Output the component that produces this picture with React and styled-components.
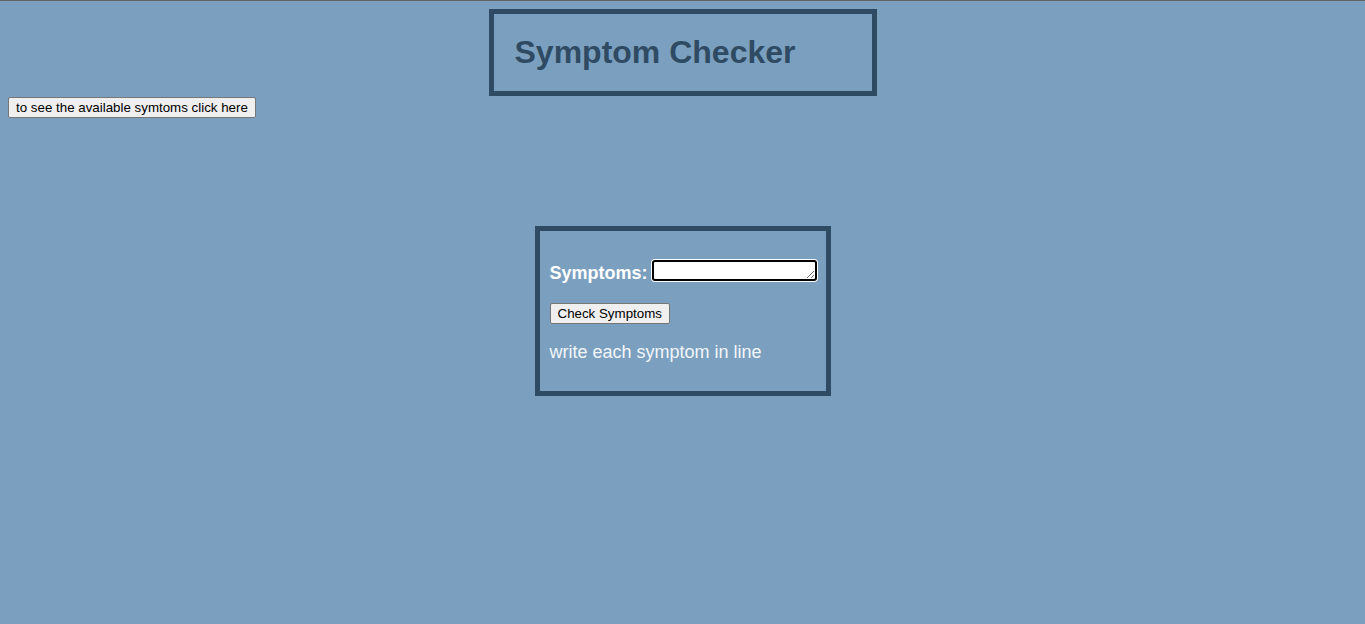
import React from 'react';
import styled, { createGlobalStyle } from 'styled-components';

const GlobalStyle = createGlobalStyle`
  html {
    background-color: #7ba0bf;
    border-top: 1px solid #5f6163;
  }
  body {
    margin: 8px;
    background-color: #7ba0bf;
    font-family: "Liberation Sans", Arial, sans-serif;
  }
`;

const Header = styled.header`
  box-sizing: border-box;
  width: 388px;
  margin: 0 auto 1px;
  padding: 20px 21px;
  border: 5px solid #2f4b64;
`;

const Title = styled.h1`
  margin: 0;
  font-size: 32px;
  line-height: 37px;
  font-weight: bold;
  color: #2f4b64;
`;

const Button = styled.button`
  display: block;
  font-family: "Liberation Sans", Arial, sans-serif;
  font-size: 13.33px;
  line-height: 15px;
  color: #000;
  background-color: #efefef;
  border: 1px solid #767676;
  border-radius: 2px;
  padding: 2px 7px;
  cursor: pointer;
`;

const FormBox = styled.form`
  box-sizing: border-box;
  width: 296px;
  margin: 108px auto 0;
  padding: 29px 10px 28px 10px;
  border: 5px solid #2f4b64;
  display: flex;
  flex-direction: column;
  align-items: flex-start;
`;

const Row = styled.div`
  display: flex;
  align-items: flex-end;
  gap: 4px;
`;

const Label = styled.label`
  font-size: 18px;
  font-weight: bold;
  color: #fff;
  line-height: 16px;
`;

const Input = styled.textarea`
  box-sizing: border-box;
  width: 165px;
  height: 21px;
  padding: 0 2px;
  border: 2px solid #000;
  border-radius: 3px;
  box-shadow: 0 0 0 1px #fff;
  background: #fff;
  font-family: "Liberation Mono", monospace;
  font-size: 13px;
  outline: none;
`;

const SubmitButton = styled(Button)`
  margin-top: 22px;
`;

const Hint = styled.p`
  margin: 18px 0 0;
  font-size: 18px;
  line-height: 21px;
  color: #f2f5f8;
`;

const App = () => {
  return (
    <>
      <GlobalStyle />
      <Header>
        <Title>Symptom Checker</Title>
      </Header>
      <Button type="button">to see the available symtoms click here</Button>
      <FormBox onSubmit={e => e.preventDefault()}>
        <Row>
          <Label htmlFor="symptoms">Symptoms:</Label>
          <Input id="symptoms" rows={1} />
        </Row>
        <SubmitButton type="submit">Check Symptoms</SubmitButton>
        <Hint>write each symptom in line</Hint>
      </FormBox>
    </>
  );
};

export default App;
